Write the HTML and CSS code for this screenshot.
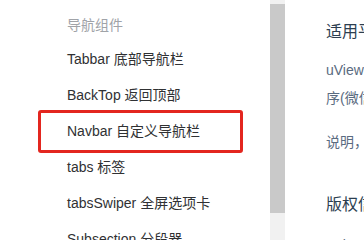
FILE: index.html
```html
<!DOCTYPE html>
<html lang="zh-CN">
<head>
<meta charset="utf-8">
<title>uView 文档</title>
<link rel="stylesheet" href="styles.css">
</head>
<body>
<div class="page">
  <nav class="sidebar">
    <div class="group-title">导航组件</div>
    <ul class="menu">
      <li class="item">Tabbar 底部导航栏</li>
      <li class="item">BackTop 返回顶部</li>
      <li class="item marked">Navbar 自定义导航栏<span class="mark"></span></li>
      <li class="item">tabs 标签</li>
      <li class="item">tabsSwiper 全屏选项卡</li>
      <li class="item">Subsection 分段器</li>
    </ul>
  </nav>
  <div class="scrollbar"><div class="thumb"></div></div>
  <main class="main">
    <h2 class="heading">适用平台</h2>
    <p class="text"><span class="line">uView支持H5、App、各家小程</span><span class="line">序(微信、支付宝、百度、头条、QQ)</span></p>
    <p class="text note">说明，</p>
    <h2 class="heading second">版权信息</h2>
    <p class="text">uView遵循MIT开源协议</p>
  </main>
</div>
</body>
</html>
```
FILE: styles.css
```css
html, body {
  margin: 0;
  padding: 0;
  background: #ffffff;
}
body {
  font-family: "Liberation Sans", "Noto Sans CJK SC", sans-serif;
  overflow: hidden;
}
.page {
  display: flex;
  height: 240px;
  overflow: hidden;
}
.sidebar {
  flex: none;
  width: 270px;
  padding-top: 9px;
}
.group-title {
  padding-left: 67px;
  height: 32px;
  line-height: 32px;
  font-size: 14px;
  color: #a0a3a8;
}
.menu {
  list-style: none;
  margin: 0;
  padding: 0;
}
.item {
  position: relative;
  padding-left: 67px;
  height: 36px;
  line-height: 36px;
  font-size: 14px;
  color: #303133;
  white-space: nowrap;
}
.mark {
  position: absolute;
  left: 38px;
  top: -3px;
  width: 205px;
  height: 43px;
  box-sizing: border-box;
  border: 3px solid #e3261f;
  border-radius: 3px;
}
.scrollbar {
  flex: none;
  width: 15px;
  background: #f1f1f1;
}
.thumb {
  margin-top: 4px;
  height: 209px;
  background: #c9c9c9;
}
.main {
  flex: none;
  width: 600px;
  padding-left: 41px;
}
.heading {
  margin: 20px 0 0;
  font-size: 16px;
  line-height: 24px;
  font-weight: normal;
  color: #2c3e50;
}
.heading.second {
  margin-top: 37px;
}
.text {
  margin: 12px 0 0;
  font-size: 14px;
  line-height: 28px;
  color: #5a6b80;
}
.text .line {
  display: block;
  white-space: nowrap;
}
.note {
  margin-top: 16px;
}
.second + .text {
  margin-top: 14px;
}
```
